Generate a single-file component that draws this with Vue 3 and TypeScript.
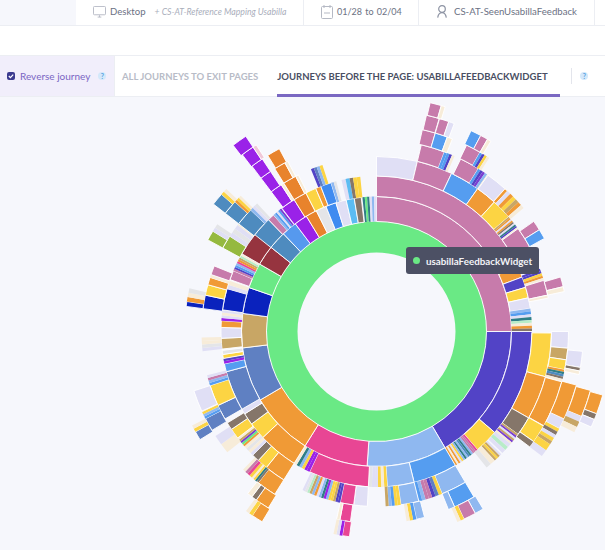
<script setup lang="ts">
type Seg = [number, number, number, string]

const R = [79, 110, 135, 155.5, 175, 192, 207, 222, 235, 247]
const CX = 376.5
const CY = 234.5 // sunburst centre inside the canvas below the tab bar

const pk = '#c77bab', lv = '#e0dff5', bl = '#559df0', or = '#f09a36', ye = '#fcd443'
const ind = '#5243c6', hp = '#e84694', lb = '#8fb8f0', br = '#85766a', st = '#5f80c2'
const tn = '#c8a665', db = '#0a22bd', gr = '#6ae985', rd = '#96343f', sb = '#4e8bbf'
const pu = '#9a22e8', dor = '#e8832c', gy = '#e4e5e8', pa = '#f7ecd9', ol = '#95b93f'
const sk = '#5cbcf2', te = '#2f7f86', vi = '#7a3fd0', mi = '#b8ecc8'

const data: Seg[] = [
  // ring 1
  [1, 0, 90, pk], [1, 90, 149.5, ind], [1, 149.5, 184, lb], [1, 184, 212, hp], [1, 212, 239.5, or],
  [1, 239.5, 263, st], [1, 263, 277.7, tn], [1, 277.7, 289, db], [1, 289, 300, gr], [1, 300, 308.6, rd],
  [1, 308.6, 316.4, sb], [1, 316.4, 323, '#5699ee'], [1, 323, 328.7, pu], [1, 328.7, 333.5, dor],
  [1, 333.5, 338, gy], [1, 338, 342.5, '#3f8bf0'], [1, 342.5, 347, lv], [1, 347, 350.5, sk], [1, 350.5, 353.5, br],
  [1, 354, 360, `${te},${gr},${te},${lv},${lb},${lv}`],
  // ring 2
  [2, 0, 65, pk], [2, 65, 69.5, or], [2, 69.5, 73.5, ind], [2, 73.5, 77.5, ye], [2, 77.5, 81.5, lv],
  [2, 81.5, 90, `${lb},${bl},${lv},${te},${mi},${pa},${or},${br}`],
  [2, 90, 130.5, ind], [2, 130.5, 139.5, ye],
  [2, 139.5, 149.5, `${hp},${pk},${pk},${lb},${te},${sb},${lb},${te},${lb},${ye},${lv},${or},${pa},${or}`],
  [2, 149.5, 166, bl], [2, 166, 176, lb], [2, 176, 184, `${ye},${pa},${ye},${lv},${lv},${gy},${pa}`],
  [2, 183, 205.5, hp], [2, 205.5, 212, `${pu},${pu},${ye},${lb},${te},${pa}`],
  [2, 212, 227, or], [2, 227, 233.5, ye], [2, 233.5, 238, br], [2, 238, 241, lv],
  [2, 240, 255, st], [2, 255, 258, bl], [2, 258, 260, `${pu},${ind}`], [2, 260, 261.5, ye], [2, 261.5, 263, gy],
  [2, 263.5, 267.5, tn], [2, 267.5, 271.5, lv], [2, 271.5, 274, or], [2, 274, 278, `${pu},${lv},${pa},${lv}`],
  [2, 278, 286, db], [2, 286, 289, `${lv},${pa}`],
  [2, 289.5, 293, pk], [2, 293, 300, `${pk},${ind},${bl},${lb},${hp},${or},${tn},${mi},${pa}`],
  [2, 300, 309, rd], [2, 308.5, 316, sb], [2, 316, 318.5, pk], [2, 318.5, 323, `${lb},${bl},${lv},${bl},${vi},${lv}`],
  [2, 322.5, 328, pu], [2, 328, 333, dor], [2, 333, 337, ye], [2, 337, 339, or],
  [2, 339, 343, '#3f8bf0'], [2, 343, 345, `${lb},${gy}`], [2, 347, 350, `${lv},${sk}`], [2, 350, 354, `${br},${ye},${ye}`],
  // ring 3
  [3, 0, 13.5, lv], [3, 13.5, 25.4, pk], [3, 25.4, 35.3, bl], [3, 35.3, 42.3, or], [3, 42.3, 49, ye],
  [3, 49, 54, `${tn},${or},${lv},${or},${br},${lv},${te},${ind},${pa}`],
  [3, 54, 61, pk], [3, 61, 66, bl], [3, 69, 73, `${ind},${ind},${ye},${or},${pa}`], [3, 73, 78, pk], [3, 78, 79, pa],
  [3, 90.5, 105, ye], [3, 105, 119.6, or], [3, 119.6, 126, br],
  [3, 126, 130, `${tn},${vi},${lv},${tn},${vi},${pa}`], [3, 130, 134, `${lv},${mi},${lv}`],
  [3, 134.5, 137.5, `${lv},${tn},${ye},${tn}`], [3, 137.5, 141, `${pa},${gy}`],
  [3, 149.5, 158, lb], [3, 158, 166, `${ye},${st},${ind},${pk},${pk},${lb},${bl}`], [3, 166, 172, lb],
  [3, 172, 177, `${ye},${ye},${bl},${lb},${tn}`],
  [3, 183, 187.5, lv], [3, 187.5, 192, hp],
  [3, 192, 205, `${ind},${ind},${tn},${ye},${ye},${lb},${pu},${te},${lb},${lv},${or},${lb},${tn},${mi},${gy},${lv}`],
  [3, 212, 219, or], [3, 219, 222.5, ye], [3, 222.5, 225, br], [3, 225, 229, `${lv},${pa},${gy},${pa}`],
  [3, 229, 232.5, `${or},${gr},${vi},${tn},${pa}`], [3, 232.5, 236, ye], [3, 236, 238.5, br],
  [3, 240, 245, st], [3, 245, 252, ye], [3, 252, 255.5, `${bl},${lb},${pk},${lv}`],
  [3, 263.5, 268, `${lv},${gy},${pa},${pa}`],
  [3, 277.5, 282, db], [3, 282, 285.5, ye], [3, 285.5, 288, or], [3, 288, 290, `${pa},${lv}`],
  [3, 289, 292, pk], [3, 298.5, 303, ol], [3, 303, 309, `${lv},${gy},${lv},${pa}`],
  [3, 308, 314, sb], [3, 314, 317, `${lb},${lv},${gy}`],
  [3, 323, 327, pu], [3, 327, 328, pa], [3, 328, 332.5, dor], [3, 332.5, 333.5, pa],
  [3, 338, 342, `${ind},${st},${lb},${ye}`],
  // ring 4
  [4, 13.5, 20.7, pk], [4, 20.7, 24, `${bl},${bl},${ind},${pa}`], [4, 26, 32, pk], [4, 32, 36, `${bl},${ind},${vi},${lb},${pa}`],
  [4, 35.5, 42, lv], [4, 42, 43, or], [4, 43, 50, `${lv},${or},${ye},${tn},${or},${pa}`],
  [4, 55, 58, pk], [4, 58, 61, bl], [4, 73.5, 76.5, pk], [4, 76.5, 78, pa],
  [4, 90, 95, lv], [4, 95, 98.5, tn], [4, 98.5, 101.5, ye], [4, 101.5, 105, `${or},${te},${sb},${br},${pa}`],
  [4, 105.2, 119.4, or], [4, 119.5, 125, ye], [4, 125, 127, br],
  [4, 149.5, 156, bl], [4, 156, 158, lb], [4, 165.5, 168, lb], [4, 168, 171, `${bl},${ye},${pa}`],
  [4, 187.8, 191, hp], [4, 191, 192, pa],
  [4, 212, 218, or], [4, 218, 220.5, `${br},${te},${ye},${pa}`], [4, 220.5, 224, `${ye},${hp},${pk},${pa}`],
  [4, 231, 237, `${pa},${lv}`], [4, 239, 243, st], [4, 243, 246, `${bl},${lb},${ye},${pa}`], [4, 245.5, 252, lv],
  [4, 277.5, 279, db], [4, 279, 283, `${or},${pa},${gy}`],
  [4, 298.5, 301.5, ol], [4, 301.5, 304, `${lv},${gy}`], [4, 308, 312.5, sb], [4, 312.5, 315, `${or},${ye},${pa}`],
  [4, 323, 326.5, pu], [4, 328, 331.5, dor], [4, 331.5, 332.5, pa],
  // ring 5
  [5, 12.8, 16.5, pk], [5, 16.5, 20, bl], [5, 20, 21.5, pa], [5, 25.8, 30, pk], [5, 30, 33, `${bl},${ind},${ye},${pa}`],
  [5, 95.5, 100, lv], [5, 100, 101, br], [5, 101, 102, pa],
  [5, 105, 116, or], [5, 115, 118, lv], [5, 118, 123, `${ye},${br},${lv},${ye},${tn}`], [5, 123, 127, `${ye},${lv}`],
  [5, 149, 151.5, lb], [5, 151.5, 155, pk], [5, 155, 157, `${ye},${pa}`],
  [5, 187.5, 189.5, hp], [5, 189.5, 192, `${pu},${lv},${pa}`],
  [5, 211.5, 215.5, or], [5, 215.5, 217, br], [5, 217, 218.5, pa],
  [5, 238.5, 241, st], [5, 241, 243, `${ye},${pa}`],
  [5, 308, 311.5, sb], [5, 311.5, 313.5, `${ye},${pa}`],
  [5, 323, 326.5, pu], [5, 328.3, 332, dor],
  // ring 6
  [6, 13, 16.4, pk], [6, 16.5, 19, pk], [6, 19, 20.5, lv], [6, 25.2, 28, bl], [6, 28, 30, pk], [6, 30, 31, pa],
  [6, 105.4, 112.5, or], [6, 112.5, 117, `${lv},${tn},${pa}`], [6, 211, 214, or], [6, 214, 216, `${ye},${pa}`],
  [6, 322.8, 326.2, pu], [6, 326.2, 327.2, '#f0c8d8'],
  // ring 7
  [7, 13.2, 16, pk], [7, 16, 17, pa], [7, 105.7, 110.5, or], [7, 110.5, 112, br], [7, 112, 114, lv],
  [7, 322.4, 326.2, pu],
]

const pt = (r: number, deg: number) => {
  const a = (deg * Math.PI) / 180
  return `${(CX + r * Math.sin(a)).toFixed(2)} ${(CY - r * Math.cos(a)).toFixed(2)}`
}
const arc = (r0: number, r1: number, a0: number, a1: number) => {
  const large = a1 - a0 > 180 ? 1 : 0
  return `M${pt(r0, a0)}A${r0} ${r0} 0 ${large} 1 ${pt(r0, a1)}L${pt(r1, a1)}A${r1} ${r1} 0 ${large} 0 ${pt(r1, a0)}Z`
}

const segments = data.flatMap(([ring, a0, a1, colors]) => {
  const list = colors.split(',')
  const step = (a1 - a0) / list.length
  return list.map((fill, i) => ({
    d: arc(R[ring], R[ring + 1], a0 + i * step, a0 + (i + 1) * step),
    fill,
    solid: list.length === 1,
  }))
})
</script>

<template>
  <div class="page">
    <header class="topbar">
      <div class="spacer"></div>
      <div class="cell device">
        <svg class="ico" width="13" height="12" viewBox="0 0 14 13" fill="none" stroke="#b5b9c4" stroke-width="1">
          <rect x="0.5" y="0.5" width="13" height="9" rx="1" />
          <path d="M5 12h4M7 10v2" />
        </svg>
        <span>Desktop</span>
        <em>+ CS-AT-Reference Mapping Usabilla</em>
      </div>
      <div class="cell date">
        <svg class="ico" width="12" height="14" viewBox="0 0 12 14" fill="none" stroke="#b5b9c4" stroke-width="1">
          <rect x="0.5" y="1.5" width="11" height="12" rx="1" />
          <path d="M3 0v3M9 0v3M3 8h6" />
        </svg>
        <span>01/28 to 02/04</span>
      </div>
      <div class="cell user">
        <svg class="ico" width="10" height="13" viewBox="0 0 10 13" fill="none" stroke="#8d93a3" stroke-width="1.2">
          <circle cx="5" cy="4" r="3.3" />
          <path d="M0.7 12.6C1.2 9.5 3 7.6 5 7.6s3.8 1.9 4.3 5" />
        </svg>
        <span>CS-AT-SeenUsabillaFeedback</span>
      </div>
      <div class="tail"></div>
    </header>

    <div class="gap"></div>

    <nav class="tabs">
      <div class="reverse">
        <span class="check">
          <svg width="8" height="8" viewBox="0 0 8 8" fill="none" stroke="#fff" stroke-width="1.2">
            <path d="M1.8 4l1.6 1.6 2.8-3" />
          </svg>
        </span>
        <span class="rev-label">Reverse journey</span>
        <span class="help">?</span>
      </div>
      <div class="tab">ALL JOURNEYS TO EXIT PAGES</div>
      <div class="tab active">JOURNEYS BEFORE THE PAGE: USABILLAFEEDBACKWIDGET</div>
      <div class="tab-end"><span class="help">?</span></div>
    </nav>

    <main class="canvas">
      <svg class="sunburst" width="605" height="453" viewBox="0 0 605 453">
        <circle :cx="CX" :cy="CY" r="94.5" fill="none" :stroke="gr" stroke-width="31" />
        <path
          v-for="(s, i) in segments"
          :key="i"
          :d="s.d"
          :fill="s.fill"
          :stroke="s.solid ? '#fff' : 'none'"
          :stroke-width="s.solid ? 0.9 : 0"
        />
      </svg>
      <div class="tooltip">
        <span class="dot"></span>
        <span>usabillaFeedbackWidget</span>
      </div>
    </main>
  </div>
</template>

<style>
html, body { margin: 0; padding: 0; background: #f6f7fc; }
</style>

<style scoped>
.page {
  width: 605px;
  height: 550px;
  overflow: hidden;
  display: flex;
  flex-direction: column;
  background: #f6f7fc;
  font-family: Lato, "Open Sans", sans-serif;
  color: #6b7183;
}
.topbar {
  height: 25px;
  display: flex;
  align-items: stretch;
  flex: none;
  border-bottom: 1px solid #eceef3;
  background: #fff;
}
.spacer { width: 76px; background: #f6f7fc; }
.cell {
  display: flex;
  align-items: center;
  border-right: 1px solid #eceef3;
  box-sizing: border-box;
  font-size: 9.6px;
  padding-bottom: 2px;
}
.device { width: 228px; padding-left: 17px; }
.device .ico { margin-right: 4px; flex: none; }
.device em {
  margin-left: 9px;
  font-size: 8.7px;
  color: #a9aebb;
  white-space: nowrap;
}
.date { width: 115px; padding-left: 17px; font-size: 9px; }
.date .ico { margin-right: 4px; flex: none; }
.date span { word-spacing: 1px; }
.user { width: 176px; padding-left: 18px; white-space: nowrap; }
.user .ico { margin-right: 7px; flex: none; }
.tail { flex: 1; }
.gap { height: 29px; flex: none; background: #fff; }
.tabs {
  height: 42px;
  flex: none;
  display: flex;
  background: #fff;
  box-sizing: border-box;
  border-top: 1px solid #eceef3;
  border-bottom: 1px solid #eceef3;
  font-size: 9.5px;
  font-weight: 700;
  white-space: nowrap;
}
.reverse {
  width: 115px;
  flex: none;
  box-sizing: border-box;
  background: #f1eefb;
  border-right: 1px solid #eceef3;
  display: flex;
  align-items: center;
  padding-left: 7px;
  font-weight: 400;
}
.check {
  width: 8px;
  height: 8px;
  border-radius: 2px;
  background: #3b3a8f;
  display: inline-flex;
}
.rev-label {
  margin-left: 5px;
  color: #7a66c4;
  font-size: 10px;
}
.help {
  width: 8px;
  height: 8px;
  margin-left: 8px;
  border-radius: 50%;
  background: #d3e8fa;
  color: #5aa2e0;
  font-size: 7px;
  line-height: 8px;
  text-align: center;
  font-weight: 700;
}
.tab {
  color: #b8bcc7;
  display: flex;
  align-items: center;
  margin-left: 7px;
}
.tab.active {
  margin-left: 19px;
  width: 283px;
  height: 41px;
  box-sizing: border-box;
  color: #4a4f63;
  border-bottom: 3px solid #7a68c2;
  padding-top: 3px;
  flex: none;
}
.tab-end {
  margin: 12px 0 12px 11px;
  padding-left: 0;
  border-left: 1px solid #e3e5ec;
  display: flex;
  align-items: center;
}
.canvas {
  position: relative;
  flex: 1;
}
.sunburst { display: block; }
.tooltip {
  position: absolute;
  left: 406px;
  top: 150px;
  width: 133px;
  height: 27px;
  box-sizing: border-box;
  padding-left: 7px;
  display: flex;
  align-items: center;
  gap: 6px;
  border-radius: 3px;
  background: #4c5064;
  color: #f2f3f7;
  font-size: 9.8px;
  font-weight: 700;
  white-space: nowrap;
}
.dot {
  flex: none;
  width: 7px;
  height: 7px;
  border-radius: 50%;
  background: #6ae985;
}
</style>
